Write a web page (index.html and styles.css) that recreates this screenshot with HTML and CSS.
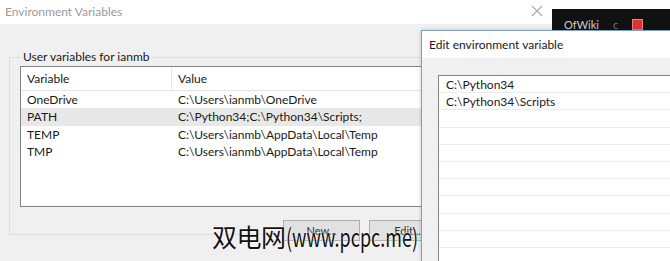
FILE: index.html
```html
<!DOCTYPE html>
<html>
<head>
<meta charset="utf-8">
<link rel="stylesheet" href="styles.css">
</head>
<body>
<div class="screen">
  <div class="main">
    <div class="titlebar">
      <span class="title">Environment Variables</span>
      <svg class="close" width="12" height="12" viewBox="0 0 12 12"><path d="M1 1L11 11M11 1L1 11" stroke="#a8a8a8" stroke-width="1.1" fill="none"/></svg>
    </div>
    <div class="body">
      <fieldset class="group">
        <legend>User variables for ianmb</legend>
        <div class="list">
          <div class="row head"><span class="c1">Variable</span><span class="c2">Value</span></div>
          <div class="row"><span class="c1">OneDrive</span><span class="c2">C:\Users\ianmb\OneDrive</span></div>
          <div class="row sel"><span class="c1">PATH</span><span class="c2">C:\Python34;C:\Python34\Scripts;</span></div>
          <div class="row"><span class="c1">TEMP</span><span class="c2">C:\Users\ianmb\AppData\Local\Temp</span></div>
          <div class="row"><span class="c1">TMP</span><span class="c2">C:\Users\ianmb\AppData\Local\Temp</span></div>
        </div>
        <div class="buttons">
          <div class="btn new">New...</div>
          <div class="btn edit">Edit...</div>
        </div>
      </fieldset>
    </div>
  </div>
  <div class="desktop">
    <div class="taskbar"><span class="tb-text">OfWiki</span><span class="tb-c">c</span><span class="tb-icon"></span></div>
  </div>
  <div class="editdlg">
    <div class="e-title">Edit environment variable</div>
    <div class="e-body">
      <div class="e-list">
        <div class="e-row">C:\Python34</div>
        <div class="e-row">C:\Python34\Scripts</div>
        <div class="e-row"></div>
        <div class="e-row"></div>
        <div class="e-row"></div>
        <div class="e-row"></div>
        <div class="e-row"></div>
        <div class="e-row"></div>
        <div class="e-row"></div>
        <div class="e-row"></div>
        <div class="e-row"></div>
      </div>
    </div>
  </div>
  <div class="watermark">双电网<span class="wm-latin">(www.pcpc.me)</span></div>
</div>
</body>
</html>
```

FILE: styles.css
```css
html, body {
  margin: 0;
  padding: 0;
  width: 670px;
  height: 261px;
  overflow: hidden;
  background: #f0f0f0;
}
.screen {
  position: relative;
  width: 670px;
  height: 261px;
  overflow: hidden;
  display: flex;
  font-family: Lato, "Open Sans", sans-serif;
  font-size: 12px;
  color: #1a1a1a;
}
.main {
  width: 552px;
  flex: none;
  display: flex;
  flex-direction: column;
  background: #f0f0f0;
  box-shadow: 1px 0 2px rgba(0,0,0,0.15);
}
.titlebar {
  height: 24px;
  flex: none;
  background: #ffffff;
  display: flex;
  align-items: center;
  justify-content: space-between;
  padding: 0 8px 2px 5px;
  box-sizing: border-box;
}
.title {
  color: #9a9a9a;
  font-size: 12px;
}
.close {
  margin-right: 1px;
}
.body {
  flex: 1;
  padding: 25px 0 0 9px;
}
.group {
  margin: 0;
  border: 1px solid #dcdcdc;
  padding: 0 10px 11px 10px;
  height: 186px;
  box-sizing: border-box;
}
.group legend {
  padding: 0 2px 0 2px;
  margin-left: 1px;
  font-size: 12px;
  line-height: 16px;
  color: #1a1a1a;
}
.list {
  margin-top: 1px;
  background: #ffffff;
  border: 1px solid #828282;
  height: 141px;
  box-sizing: border-box;
  width: 600px;
}
.row {
  display: flex;
  height: 17.3px;
  align-items: center;
  white-space: nowrap;
}
.row.head {
  height: 23px;
  border-bottom: 1px solid #e5e5e5;
}
.row.sel {
  background: #e8e8e8;
}
.c1 {
  width: 151px;
  padding-left: 6px;
  flex: none;
  box-sizing: border-box;
}
.head .c1 {
  border-right: 1px solid #e5e5e5;
  height: 23px;
  line-height: 23px;
}
.c2 {
  padding-left: 6px;
}
.buttons {
  display: flex;
  gap: 9px;
  margin-top: 13px;
  padding-left: 263px;
}
.btn {
  height: 21px;
  box-sizing: border-box;
  background: #e1e1e1;
  border: 1px solid #adadad;
  font-size: 11px;
  color: #333;
  display: flex;
  align-items: flex-start;
  justify-content: center;
  padding-top: 3px;
}
.btn.new { width: 77px; }
.btn.edit { width: 77px; }
.desktop {
  flex: 1;
  padding-top: 9px;
  background: #ffffff;
  display: flex;
  flex-direction: column;
}
.taskbar {
  height: 21px;
  background: #111111;
  display: flex;
  align-items: flex-end;
  gap: 14px;
  padding-left: 12px;
  overflow: hidden;
}
.tb-text {
  color: #cfcfcf;
  font-size: 11px;
  line-height: 11px;
}
.tb-c {
  color: #777;
  font-size: 11px;
  line-height: 11px;
}
.tb-icon {
  width: 9px;
  height: 9px;
  background: #d33;
  border: 1px solid #f08080;
}
.editdlg {
  position: absolute;
  left: 421px;
  top: 30px;
  width: 249px;
  height: 231px;
  box-sizing: border-box;
  border: 1px solid #7d9fc8;
  border-right: none;
  border-bottom: none;
  background: #f0f0f0;
  display: flex;
  flex-direction: column;
  box-shadow: 0 0 4px rgba(0,0,0,0.2);
}
.e-title {
  height: 27px;
  flex: none;
  background: #ffffff;
  display: flex;
  align-items: center;
  padding-left: 7px;
  font-size: 12px;
  color: #1a1a1a;
  padding-bottom: 1px;
  box-sizing: border-box;
}
.e-body {
  flex: 1;
  min-height: 0;
  overflow: hidden;
  padding: 17px 0 0 16px;
  display: flex;
  flex-direction: column;
}
.e-list {
  flex: 1;
  overflow: hidden;
  background: #ffffff;
  border: 1px solid #828282;
  border-right: none;
  border-bottom: none;
}
.e-row {
  height: 17.2px;
  box-sizing: border-box;
  border-bottom: 1px solid #ececec;
  padding-left: 7px;
  display: flex;
  align-items: center;
  white-space: nowrap;
}
.watermark {
  position: absolute;
  left: 212px;
  top: 220px;
  font-family: "Noto Sans CJK SC", sans-serif;
  font-size: 25px;
  line-height: 32px;
  color: #111;
  white-space: nowrap;
  text-shadow: 0 0 2px #fff, 0 0 2px #fff;
  letter-spacing: -0.5px;
}
.wm-latin {
  display: inline-block;
  transform: scaleX(0.72);
  transform-origin: left center;
  letter-spacing: 0;
}
```
